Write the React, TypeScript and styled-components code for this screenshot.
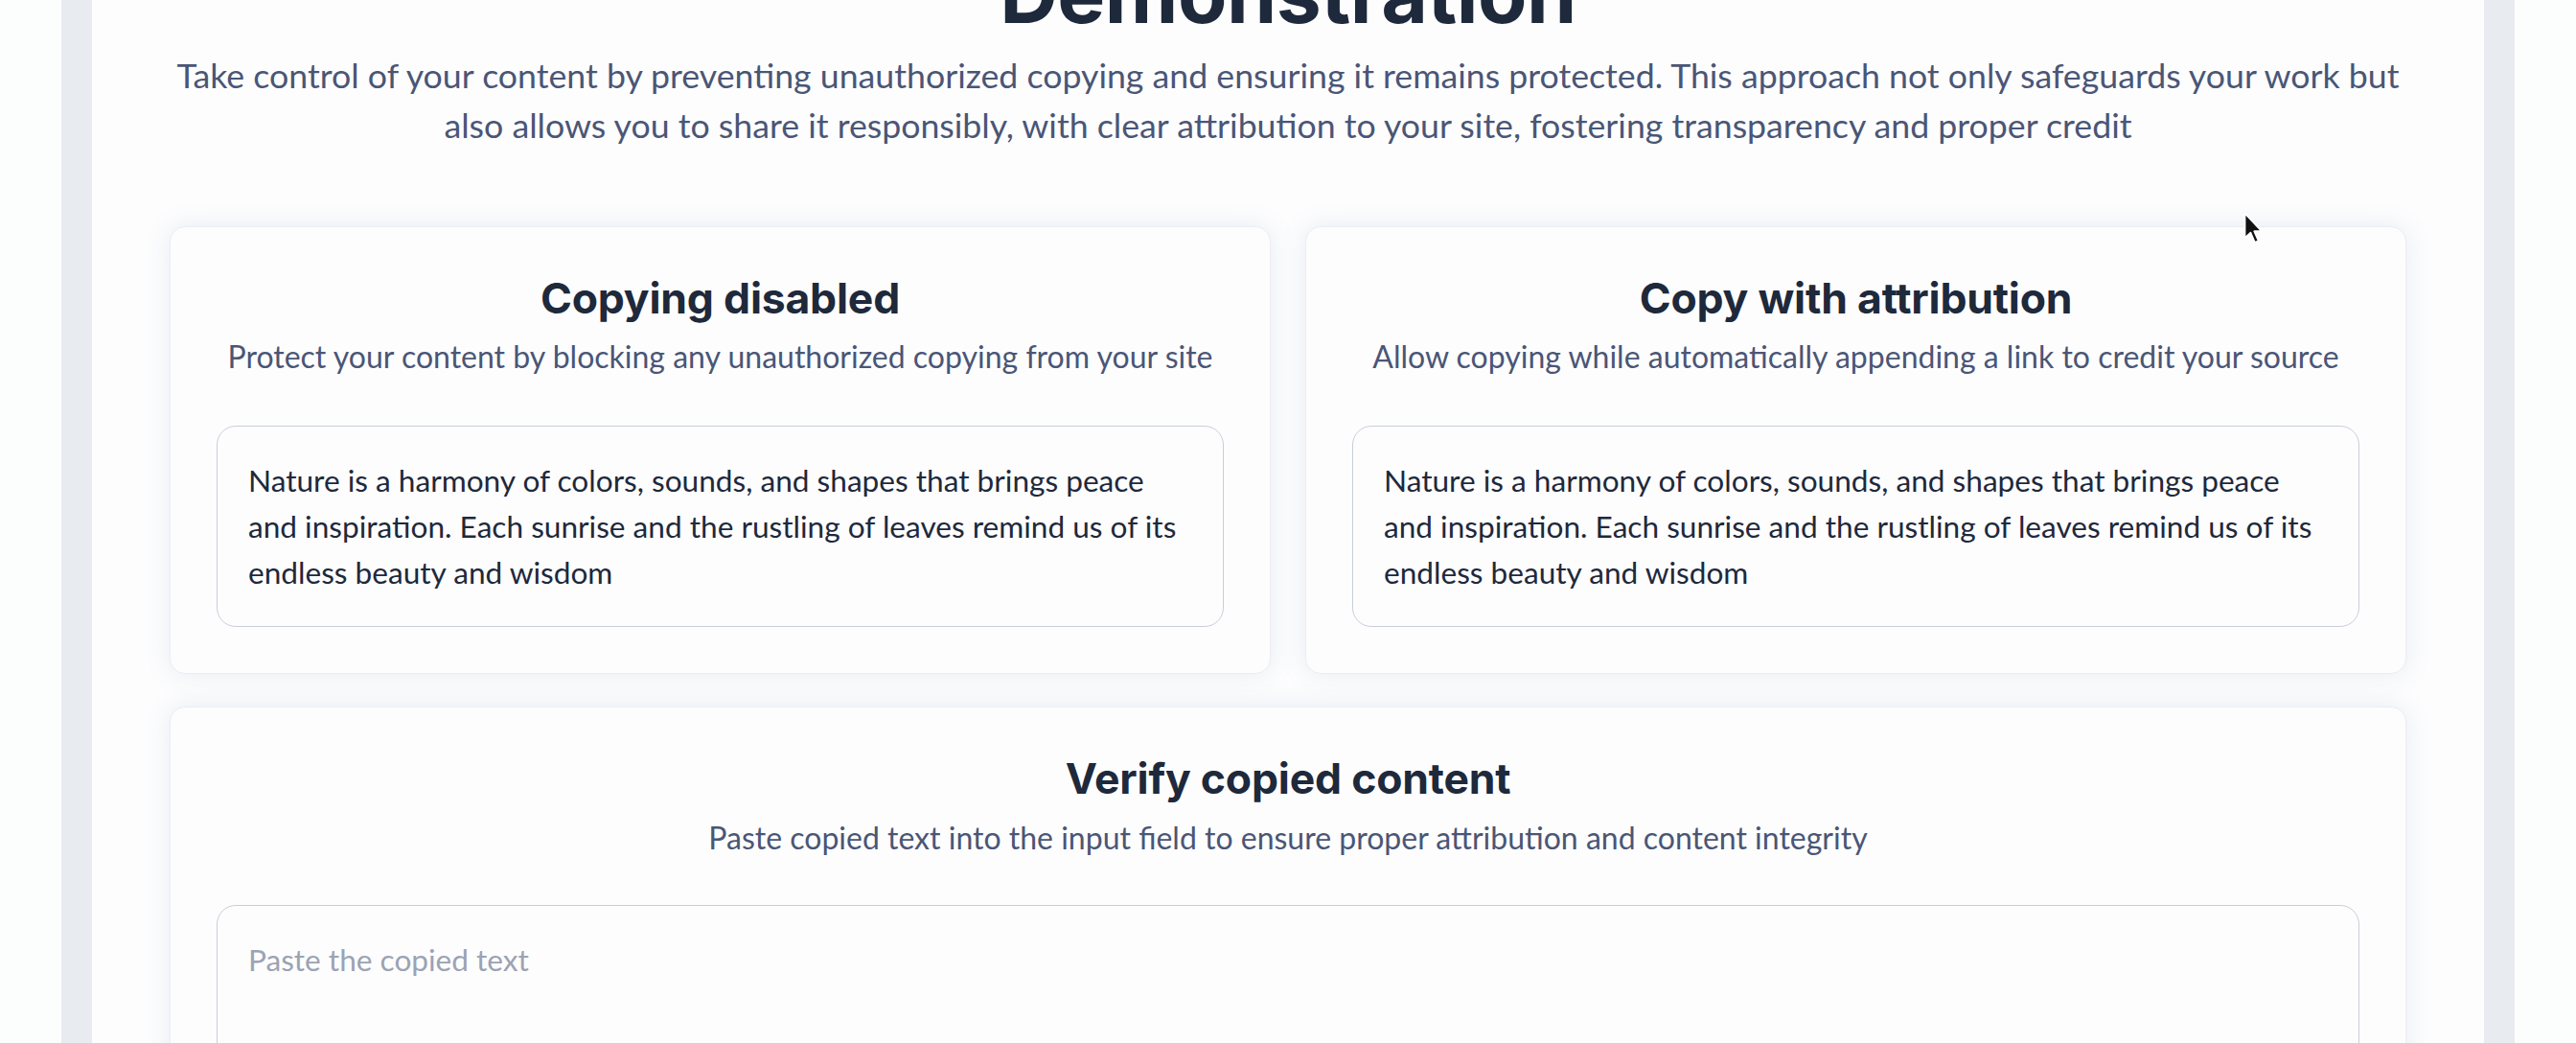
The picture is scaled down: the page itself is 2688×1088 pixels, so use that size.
import React from 'react';
import styled, { createGlobalStyle } from 'styled-components';

// --- page text ---
const INTRO =
  'Take control of your content by preventing unauthorized copying and ensuring it remains protected. This approach not only safeguards your work but also allows you to share it responsibly, with clear attribution to your site, fostering transparency and proper credit';

const SAMPLE_TEXT =
  'Nature is a harmony of colors, sounds, and shapes that brings peace and inspiration. Each sunrise and the rustling of leaves remind us of its endless beauty and wisdom';

const DEMOS = [
  {
    id: 'disabled',
    title: 'Copying disabled',
    description: 'Protect your content by blocking any unauthorized copying from your site',
  },
  {
    id: 'attribution',
    title: 'Copy with attribution',
    description: 'Allow copying while automatically appending a link to credit your source',
  },
];

// ==============================================================================
// === Styled Components ========================================================
// ==============================================================================

const GlobalStyle = createGlobalStyle`
  html, body {
    margin: 0;
    padding: 0;
    background: #fcfdfd;
    overflow: hidden;
  }
  * { box-sizing: border-box; }
`;

const Shell = styled.div`
  position: relative;
  display: flex;
  min-height: 100vh;
  padding: 0 64px;
`;

const Frame = styled.main`
  flex: 1;
  background: #fdfdfe;
  border-left: 32px solid #e8ecf1;
  border-right: 32px solid #e8ecf1;
  padding: 0 81px 80px;
`;

const Header = styled.header`
  text-align: center;
`;

const Title = styled.h1`
  margin: -56px 0 0;
  font-family: Inter, 'Liberation Sans', sans-serif;
  font-weight: 700;
  font-size: 84px;
  line-height: 1.2;
  letter-spacing: -0.5px;
  color: #1e293b;
`;

const Intro = styled.p`
  margin: 8px 0 0;
  font-family: Lato, 'Open Sans', sans-serif;
  font-size: 35.7px;
  line-height: 52px;
  color: #4a5676;
`;

const DemoGrid = styled.section`
  display: grid;
  grid-template-columns: 1fr 1fr;
  column-gap: 36px;
  row-gap: 34px;
  margin-top: 79px;
`;

const Card = styled.div<{ $wide?: boolean }>`
  grid-column: ${({ $wide }) => ($wide ? '1 / -1' : 'auto')};
  background: #fdfdfe;
  border: 1px solid #eaeef4;
  border-radius: 16px;
  box-shadow: 0 0 26px rgba(120, 140, 175, 0.16);
  padding: 48px;
  text-align: center;
`;

const CardTitle = styled.h2`
  margin: 0;
  font-family: Inter, 'Liberation Sans', sans-serif;
  font-weight: 700;
  font-size: 44.5px;
  line-height: 1.2;
  letter-spacing: -0.2px;
  color: #1e293b;
`;

const CardText = styled.p`
  margin: 10px 0 0;
  font-family: Lato, 'Open Sans', sans-serif;
  font-size: 32px;
  line-height: 48px;
  color: #4a5676;
`;

const SampleBox = styled.div<{ $locked?: boolean }>`
  margin-top: 48px;
  border: 1px solid #c9ced8;
  border-radius: 20px;
  padding: 32px;
  text-align: left;
  font-family: Lato, 'Open Sans', sans-serif;
  font-size: 31.6px;
  line-height: 48px;
  color: #1e293b;
  user-select: ${({ $locked }) => ($locked ? 'none' : 'text')};
`;

const PasteField = styled.textarea`
  display: block;
  width: 100%;
  min-height: 260px;
  margin-top: 46px;
  border: 1px solid #c9ced8;
  border-radius: 20px;
  padding: 32px;
  resize: none;
  background: transparent;
  font-family: Lato, 'Open Sans', sans-serif;
  font-size: 31.6px;
  line-height: 48px;
  color: #1e293b;
  outline: none;

  &::placeholder {
    color: #9ba3b4;
  }
`;

const Pointer = styled.svg`
  position: absolute;
  left: 2340px;
  top: 220px;
  width: 22px;
  height: 36px;
  pointer-events: none;
`;

// ==============================================================================
// === Component ================================================================
// ==============================================================================

const App = () => {
  return (
    <>
      <GlobalStyle />
      <Shell>
        <Frame>
          <Header>
            <Title>Demonstration</Title>
            <Intro>{INTRO}</Intro>
          </Header>

          <DemoGrid>
            {DEMOS.map(demo => (
              <Card key={demo.id}>
                <CardTitle>{demo.title}</CardTitle>
                <CardText>{demo.description}</CardText>
                <SampleBox $locked={demo.id === 'disabled'}>{SAMPLE_TEXT}</SampleBox>
              </Card>
            ))}

            <Card $wide>
              <CardTitle>Verify copied content</CardTitle>
              <CardText>
                Paste copied text into the input field to ensure proper attribution and content integrity
              </CardText>
              <PasteField placeholder="Paste the copied text" />
            </Card>
          </DemoGrid>
        </Frame>

        {/* mouse pointer captured in the screenshot */}
        <Pointer viewBox="0 0 13 21">
          <path
            d="M1.5 1.5 L1.5 16.5 L5 13.2 L7.6 19.2 L9.8 18.3 L7.2 12.4 L11.8 12.4 Z"
            fill="#111"
            stroke="#fff"
            strokeWidth="1"
            strokeLinejoin="round"
          />
        </Pointer>
      </Shell>
    </>
  );
};

export default App;
